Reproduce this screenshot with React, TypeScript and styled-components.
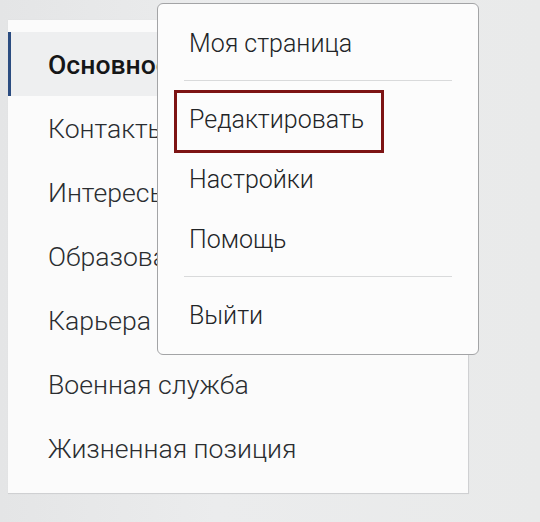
import React from "react";
import styled, { createGlobalStyle } from "styled-components";

const GlobalStyle = createGlobalStyle`
  html, body {
    margin: 0;
    padding: 0;
    background: #e8e9ea;
  }
  body {
    font-family: Roboto, "Noto Sans", "Liberation Sans", sans-serif;
    -webkit-font-smoothing: antialiased;
  }
`;

const Page = styled.div`
  position: relative;
  width: 540px;
  height: 522px;
  overflow: hidden;
  background: linear-gradient(90deg, #e4e5e6 0%, #ebeced 40%, #e9eaea 100%);
  padding: 20px 0 0 8px;
  box-sizing: border-box;
`;

const SidePanel = styled.nav`
  width: 461px;
  box-sizing: border-box;
  padding: 12px 0 13px;
  background: #fbfbfb;
  border-right: 1px solid #cfd0d2;
  border-bottom: 1px solid #cfd0d2;
  box-shadow: 0 0 1px rgba(0, 0, 0, 0.06);
  display: flex;
  flex-direction: column;
`;

const SideItem = styled.div<{ $active?: boolean }>`
  height: 64px;
  display: flex;
  align-items: center;
  font-size: 26.6px;
  color: ${(p) => (p.$active ? "#151617" : "#2a2d30")};
  font-weight: ${(p) => (p.$active ? 500 : 300)};
  background: ${(p) => (p.$active ? "#eeeff0" : "transparent")};
  border-left: 3px solid ${(p) => (p.$active ? "#2b4c80" : "transparent")};
  padding-left: 37px;
  white-space: nowrap;
`;

const Menu = styled.div`
  position: absolute;
  left: 157px;
  top: 3px;
  width: 322px;
  box-sizing: border-box;
  padding: 9px 0;
  background: #fcfcfc;
  border: 1px solid #a3a4a6;
  border-radius: 6px;
  display: flex;
  flex-direction: column;
`;

const MenuItem = styled.div<{ $marked?: boolean }>`
  position: relative;
  height: 60px;
  display: flex;
  align-items: center;
  padding-left: 31px;
  font-size: 25px;
  font-weight: 300;
  color: #222427;
  white-space: nowrap;

  ${(p) =>
    p.$marked &&
    `
    &::after {
      content: "";
      position: absolute;
      left: 16px;
      top: 1px;
      width: 210px;
      height: 63px;
      box-sizing: border-box;
      border: 3px solid #7d1414;
    }
  `}
`;

const Separator = styled.div`
  height: 1px;
  margin: 7px 26px 8px;
  background: #d9dadb;
`;

const sideItems = [
  "Основное",
  "Контакты",
  "Интересы",
  "Образование",
  "Карьера",
  "Военная служба",
  "Жизненная позиция",
];

export default function App() {
  return (
    <>
      <GlobalStyle />
      <Page>
        <SidePanel>
          {sideItems.map((t, i) => (
            <SideItem key={t} $active={i === 0}>
              {t}
            </SideItem>
          ))}
        </SidePanel>
        <Menu>
          <MenuItem>Моя страница</MenuItem>
          <Separator />
          <MenuItem $marked>Редактировать</MenuItem>
          <MenuItem>Настройки</MenuItem>
          <MenuItem>Помощь</MenuItem>
          <Separator />
          <MenuItem>Выйти</MenuItem>
        </Menu>
      </Page>
    </>
  );
}
